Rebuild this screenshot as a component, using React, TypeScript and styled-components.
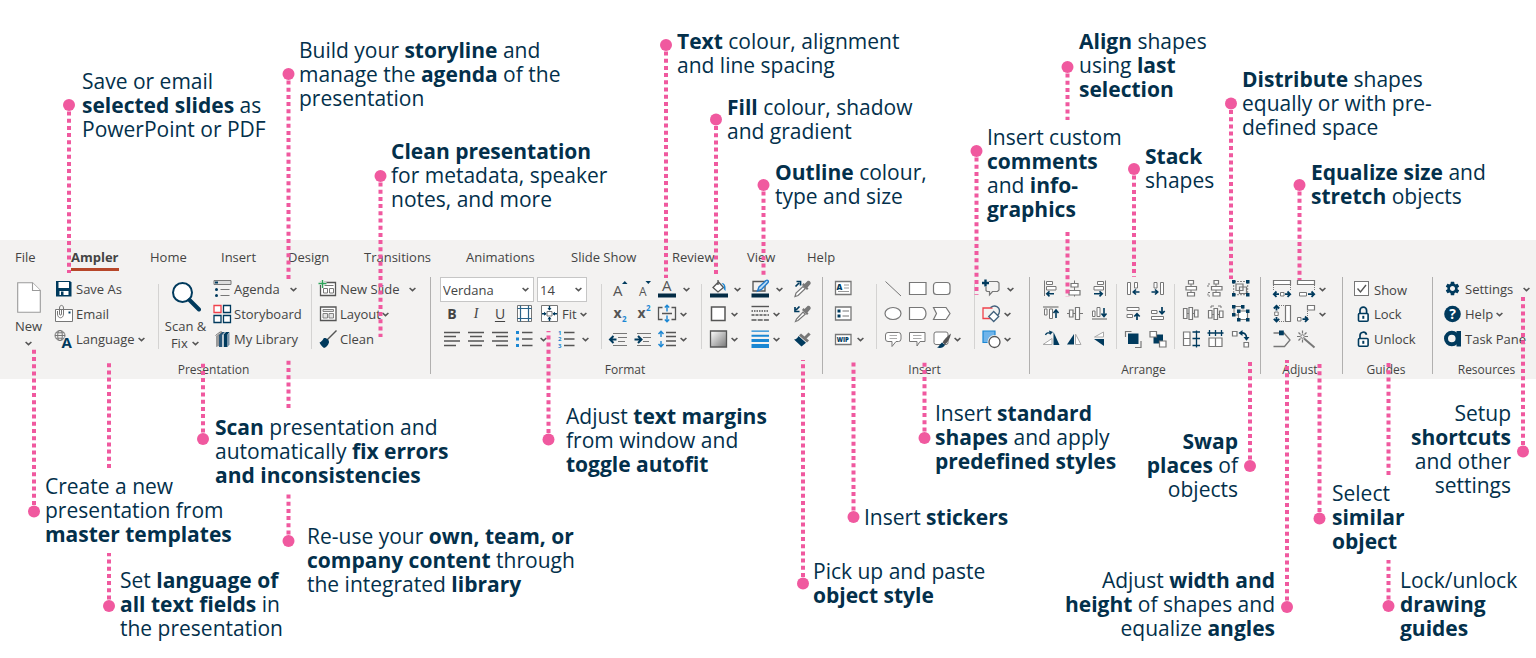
import React from "react";
import styled, { createGlobalStyle } from "styled-components";
import { MdSettings } from "react-icons/md";

const navy = "#003a5d";
const ink = "#03304b";
const grey = "#777777";
const dark = "#555555";
const blue = "#1b87d3";
const pink = "#f0599f";

const GlobalStyle = createGlobalStyle`
  * { box-sizing: border-box; }
  body {
    margin: 0;
    background: #ffffff;
    font-family: "Open Sans", "Noto Sans", sans-serif;
  }
  button, select, input { font: inherit; color: inherit; }
`;

const Page = styled.main`
  position: relative;
  overflow: hidden;
`;

const NotesArea = styled.section<{ $height: number }>`
  position: relative;
  min-height: ${(p) => p.$height}px;
`;

const Note = styled.p<{ $x: number; $y: number; $end?: boolean }>`
  position: absolute;
  left: ${(p) => p.$x}px;
  top: ${(p) => p.$y}px;
  margin: 0;
  color: ${ink};
  font-size: 21px;
  line-height: 24px;
  white-space: nowrap;
  ${(p) => p.$end && "transform: translateX(-100%); text-align: right;"}

  b {
    font-weight: 700;
  }
`;

const Overlay = styled.svg`
  position: absolute;
  inset: 0;
  width: 100%;
  height: 100%;
  overflow: visible;
  pointer-events: none;
`;

const Ribbon = styled.section`
  background: #f3f2f1;
  color: #444444;
  font-size: 13px;
`;

const Tabs = styled.nav`
  display: grid;
  grid-template-columns: 56px 79px 71px 67px 76px 102px 105px 101px 75px 60px 60px;
  justify-items: start;
  padding-left: 15px;
  padding-bottom: 6px;
`;

const Tab = styled.button<{ $active?: boolean }>`
  padding: 7px 0 1px;
  border: 0;
  border-bottom: 3px solid ${(p) => (p.$active ? "#b7472a" : "transparent")};
  background: none;
  line-height: 20px;
  font-weight: ${(p) => (p.$active ? 700 : 400)};
  white-space: nowrap;
`;

const Groups = styled.div`
  display: flex;
`;

const Group = styled.div<{ $width: number }>`
  position: relative;
  flex: none;
  width: ${(p) => p.$width}px;

  &:not(:last-child)::after {
    content: "";
    position: absolute;
    right: 0;
    top: 0;
    width: 1px;
    height: 97px;
    background: #b1b0af;
  }
`;

const GroupBody = styled.div`
  display: flex;
  height: 84px;
`;

const GroupLabel = styled.div`
  height: 18px;
  padding-right: 4px;
  line-height: 18px;
  font-size: 12px;
  text-align: center;
`;

const Cluster = styled.div<{ $pad: number; $width?: number }>`
  flex: none;
  width: ${(p) => (p.$width ? `${p.$width}px` : "auto")};
  padding-left: ${(p) => p.$pad}px;
`;

const Divider = styled.span`
  flex: none;
  width: 1px;
  height: 65px;
  margin-top: 7px;
  background: #d4d3d2;
`;

const Row = styled.div<{ $gap?: number }>`
  display: flex;
  align-items: center;
  height: 25px;
  gap: ${(p) => p.$gap ?? 0}px;
`;

const Slot = styled.div<{ $width: number }>`
  flex: none;
  width: ${(p) => p.$width}px;
`;

const ToolButton = styled.button<{ $gap?: number }>`
  display: flex;
  flex: none;
  align-items: center;
  height: 25px;
  padding: 0;
  border: 0;
  background: none;
  line-height: 18px;
  white-space: nowrap;

  & > span {
    padding-bottom: 1px;
  }
  & > svg {
    overflow: visible;
  }
  & > svg + svg {
    margin-left: ${(p) => p.$gap ?? 0}px;
  }
  & > span + svg {
    margin-left: ${(p) => p.$gap ?? 2}px;
  }
`;

const BigButton = styled.button<{ $width: number }>`
  display: flex;
  flex: none;
  flex-direction: column;
  align-items: center;
  width: ${(p) => p.$width}px;
  height: 76px;
  padding: 5px 0 0;
  border: 0;
  background: none;
  line-height: 17px;

  & > svg {
    flex: none;
    margin-bottom: 5px;
  }
`;

const BigLine = styled.span`
  display: flex;
  align-items: center;
  height: 17px;
  white-space: nowrap;
`;

const SelectBox = styled.label<{ $width: number }>`
  display: flex;
  align-items: center;
  width: ${(p) => p.$width}px;
  height: 25px;
  padding-right: 3px;
  border: 1px solid #c6c6c6;
  background: #ffffff;
`;

const Select = styled.select`
  flex: 1;
  min-width: 0;
  height: 23px;
  padding: 0 0 0 2px;
  border: 0;
  appearance: none;
  background: none;
`;

const CheckLabel = styled.label`
  display: flex;
  align-items: center;
  height: 25px;
`;

const CheckMark = styled.span`
  position: relative;
  display: flex;
  width: 24px;
  height: 25px;
`;

const Check = styled.input`
  appearance: none;
  width: 15px;
  height: 15px;
  margin: 4px 0 0 4px;
  border: 1px solid #777777;
  background: #ffffff;
`;

const CheckTick = styled.svg`
  position: absolute;
  inset: 0;
  pointer-events: none;
`;

const Chev = () => (
  <svg width="9" height="9" viewBox="0 0 9 9" fill="none" stroke={dark} strokeWidth="1.6">
    <path d="M1.6 3 4.5 5.6 7.4 3" />
  </svg>
);

const art: Record<string, React.ReactNode> = {
  save: (
    <>
      <path d="M4 4h14l1.5 1.5V19.5H4z" fill={navy} />
      <path d="M6.5 5h10.500v6H6.5zM7.5 14h9v4h-9z" fill="#fff" />
      <path d="M9 14.5h2.500v3.500H9z" fill={navy} />
    </>
  ),
  email: (
    <>
      <path d="M3.500 7.500h17v12h-17z" fill="#fff" stroke={grey} />
      <path d="M5.500 9v3c0 5 6 5 6 0V6c0-3.500-4-3.500-4 0v6c0 1.500 2 1.500 2 0V7" fill="none" stroke={grey} />
      <path d="M16.500 9.500h2v2h-2z" fill={navy} />
    </>
  ),
  language: (
    <>
      <g fill="none" stroke={grey}>
        <circle cx="8" cy="8.500" r="5" />
        <ellipse cx="8" cy="8.500" rx="2.300" ry="5" />
        <path d="M3 8.500h10M4 5.800h8M4 11.200h8" />
      </g>
      <text x="9.500" y="21" fontSize="15" fontWeight="700" fill={navy} stroke="#f3f2f1" strokeWidth="1.500" paintOrder="stroke">A</text>
    </>
  ),
  agenda: (
    <>
      <path d="M4 3.500h17v4H4z" fill="#ddd" stroke={grey} />
      <path d="M5 4.500h3v2H5z" fill={navy} />
      <circle cx="6.500" cy="12.500" r="1.500" fill={navy} />
      <circle cx="6.500" cy="18.500" r="1.500" fill={navy} />
      <path d="M10.500 12.500h9M10.500 18.500h9" stroke={grey} strokeWidth="1.200" />
    </>
  ),
  storyboard: (
    <g fill="#fff" stroke={navy} strokeWidth="1.300">
      <path d="M4 3.500h7v7H4z" stroke="#f0414b" />
      <path d="M13.500 3.500h7v7h-7zM4 13.500h7v7H4zM13.500 13.500h7v7h-7z" />
    </g>
  ),
  library: (
    <>
      <path d="M6 9l3-2v12l-3 1z" fill="#9a9a9a" />
      <path d="M9 7.500 12 5h3l-2.500 2.500V20H9z" fill="#28577a" />
      <path d="M13.500 7.500 16 5h3.500l-2 2.500V20h-4z" fill={navy} />
      <path d="M17.500 8l2-2.500v12L17.500 20z" fill="#7790a5" />
      <path d="M5.500 8.500 10 5h2L8.500 8" fill="none" stroke={grey} />
      <path d="M13 8v12" stroke="#f3f2f1" />
    </>
  ),
  newSlide: (
    <>
      <path d="M4.500 5.500h15v13h-15z" fill="#fff" stroke={dark} strokeWidth="1.300" />
      <path d="M8.500 8.500h9M7.500 11.500h4v4.500h-4zM13.500 11.500h4v4.500h-4z" fill="none" stroke={grey} />
      <path d="M6.500 2v9M2.500 6.500h8" stroke="#f3f2f1" strokeWidth="3" />
      <path d="M6.500 3v8M2.500 6.500h8" stroke="#2fa35b" strokeWidth="1.400" />
    </>
  ),
  layout: (
    <>
      <path d="M4.500 5h15.500v13.500h-15.500z" fill="#fff" stroke={dark} strokeWidth="1.300" />
      <path d="M7 7.500h10.500v2H7zM7 11.500h4.500v4.500H7zM13 11.500h4.500v4.500H13z" fill="#e4e4e4" stroke={grey} strokeWidth=".9" />
    </>
  ),
  clean: (
    <>
      <path d="M20.500 3.500 10.500 13.500" stroke={dark} strokeWidth="1.400" />
      <path d="M7.500 11.500c2-1.500 6 1.500 5.500 4-1 3-2.500 4.500-5 5.500-1.500-1-3.500-3-4.500-5.500 1.500-.5 3-2 4-4z" fill={navy} />
    </>
  ),
  frame: (
    <>
      <path d="M5.500 3.500h14v16h-14z" fill="#fff" stroke={grey} />
      <path d="M8.500 3.500v16M16.500 3.500v16M5.500 6.500h14M5.500 16.500h14" stroke="#2a6389" strokeWidth="1.200" />
    </>
  ),
  fit: (
    <>
      <path d="M3.500 3.500h16v16h-16z" fill="#fff" stroke={grey} />
      <path d="M9 9.500h5v4.500H9z" fill="none" stroke={grey} />
      <path d="M11.500 4v4M11.500 19v-4M4 11.700h4M19 11.700h-4" stroke={navy} strokeWidth="1.400" />
      <path d="M9.500 6h4l-2 2.500zM9.500 17.300h4l-2-2.500zM6 9.700v4l2.500-2zM17 9.700v4l-2.500-2z" fill={navy} />
    </>
  ),
  alignLeft: <path d="M4 5.500h16M4 9.500h12M4 14h16M4 18.500h12" stroke={dark} strokeWidth="1.300" />,
  alignCenter: <path d="M4 5.500h16M6 9.500h12M4 14h16M6 18.500h12" stroke={dark} strokeWidth="1.300" />,
  alignRight: <path d="M4 5.500h16M8 9.500h12M4 14h16M8 18.500h12" stroke={dark} strokeWidth="1.300" />,
  bullets: (
    <>
      <path d="M4 4h3v3H4zM4 10.500h3v3H4zM4 17h3v3H4z" fill={blue} />
      <path d="M10 5.500h10.500M10 12h10.500M10 18.500h10.500" stroke={dark} strokeWidth="1.300" />
    </>
  ),
  numbers: (
    <>
      <g fill={blue} fontSize="6" fontWeight="700">
        <text x="4" y="8">1</text>
        <text x="4" y="14">2</text>
        <text x="4" y="21">3</text>
      </g>
      <path d="M10 5.500h10.500M10 12h10.500M10 18.500h10.500" stroke={dark} strokeWidth="1.300" />
    </>
  ),
  grow: (
    <>
      <text x="6" y="18.500" fontSize="15" fill={dark}>A</text>
      <path d="M15 7h5.500l-2.700-3z" fill={navy} />
    </>
  ),
  shrink: (
    <>
      <text x="8" y="18.500" fontSize="12" fill={dark}>A</text>
      <path d="M14.500 4H20l-2.700 3z" fill={navy} />
    </>
  ),
  fontColor: (
    <>
      <text x="7" y="14" fontSize="15" fill={dark}>A</text>
      <path d="M3 16.500h18v4H3z" fill="#032b44" />
    </>
  ),
  sub: (
    <>
      <text x="6.500" y="16" fontSize="14" fontWeight="700" fill={dark}>x</text>
      <text x="15" y="20" fontSize="8" fontWeight="700" fill={blue}>2</text>
    </>
  ),
  sup: (
    <>
      <text x="6.500" y="16" fontSize="14" fontWeight="700" fill={dark}>x</text>
      <text x="15" y="9" fontSize="8" fontWeight="700" fill={blue}>2</text>
    </>
  ),
  margins: (
    <>
      <path d="M7.500 5.500h-4v12h4M16.500 5.500h4v12h-4M7 11.500h10" fill="none" stroke={dark} strokeWidth="1.300" />
      <path d="M12 3.500v6M12 19.500v-6M9.800 5.500 12 3.200l2.200 2.300M9.800 17.500 12 19.800l2.200-2.300" fill="none" stroke={blue} strokeWidth="1.400" />
    </>
  ),
  outdent: (
    <>
      <path d="M6 6.500h14M11 10.500h9M11 14.500h7M6 18.500h14" stroke={grey} strokeWidth="1.200" />
      <path d="M3.500 12.500h6M6.500 9l-3.500 3.500L6.500 16" fill="none" stroke={navy} strokeWidth="2" />
    </>
  ),
  indent: (
    <>
      <path d="M6 6.500h14M12 10.500h8M12 14.500h6M6 18.500h14" stroke={grey} strokeWidth="1.200" />
      <path d="M3.500 12.500h6M7 9l3.500 3.500L7 16" fill="none" stroke={navy} strokeWidth="2" />
    </>
  ),
  spacing: (
    <>
      <path d="M11 5.500h10M11 9.500h10M11 14h10M11 18.500h10" stroke={dark} strokeWidth="1.300" />
      <path d="M6 4.500v5.500M6 14v5.500M3.500 7 6 4.200 8.500 7M3.500 17 6 19.800 8.500 17" fill="none" stroke={blue} strokeWidth="1.400" />
    </>
  ),
  fill: (
    <>
      <path d="M12 3v5M7 10.500 12.500 5l5 5.500-5.500 4.500z" fill="#fff" stroke={dark} strokeWidth="1.300" />
      <path d="M15.500 6c3.500 0 4.500 3 4 8-1.500-1-2.500-3-1.500-5z" fill={blue} />
      <path d="M4 16.500h18v4H4z" fill="#032b44" />
    </>
  ),
  shadow: <path d="M5.500 5h13.500v13.500H5.500z" fill="#fff" stroke={dark} strokeWidth="1.500" />,
  gradient: (
    <>
      <defs>
        <linearGradient id="grad" x1="0" y1="0" x2="1" y2="1">
          <stop offset="0" stopColor="#fff" />
          <stop offset="1" stopColor="#777" />
        </linearGradient>
      </defs>
      <path d="M4.500 4h16v16h-16z" fill="url(#grad)" stroke={dark} strokeWidth="1.300" />
    </>
  ),
  outline: (
    <>
      <path d="M5 4.500h12v9.500H5z" fill="none" stroke={dark} strokeWidth="1.300" />
      <path d="M9.500 14 11 10l7-6.500c1.500-1 3 .5 2 2L13.500 12.500z" fill="#bcdcf5" stroke="#1f78c8" strokeWidth="1.400" />
      <path d="M3.500 16.500H21v4H3.500z" fill="#032b44" />
    </>
  ),
  dashes: (
    <g stroke={dark} strokeWidth="1.400">
      <path d="M3.500 4.500H21" />
      <path d="M3.500 9H21" strokeDasharray="1.500 1" />
      <path d="M3.500 13H21" strokeDasharray="3 1" />
      <path d="M3.500 18H21" strokeDasharray="5 1.200" />
    </g>
  ),
  weights: <path d="M3.500 3.500H21v1.300H3.500zM3.500 7.700H21v2H3.500zM3.500 12H21v3H3.500zM3.500 17H21v4H3.500z" fill={blue} />,
  pick: (
    <>
      <path d="M5 19.500 6 16l7-6.500 2.200 2.200L8 18.500z" fill="#fff" stroke={grey} strokeWidth="1.200" />
      <path d="M12 8l5 5 1.500-1.500-1-1L20.500 7c1-1.500-1-4-3-3L14.500 7l-1-1z" fill={grey} />
      <path d="M5.500 9.500 9 6M6.500 4.500h4V8.500" fill="none" stroke={navy} strokeWidth="1.700" />
    </>
  ),
  paste: (
    <>
      <path d="M5.500 19.500 6.500 17l6.500-7 2.200 2.200L8 18.500z" fill="#fff" stroke={grey} strokeWidth="1.200" />
      <path d="M12 8l5 5 1.500-1.500-1-1L20.500 7c1-1.500-1-4-3-3L14.500 7l-1-1z" fill={grey} />
      <path d="M9.500 4.500 6 8M5 5v4.500H9.500" fill="none" stroke={navy} strokeWidth="1.700" />
    </>
  ),
  brush: (
    <>
      <path d="M14 10l4.500-4.500 2.200 2L16 12z" fill={grey} />
      <path d="M11 6.500l8 7-2 2-8-7z" fill={grey} />
      <path d="M8.500 9l7.500 6.800L11.500 19.500 4 12.500c2 0 3.500-1.500 4.500-3.500z" fill={navy} />
    </>
  ),
  textCard: (
    <>
      <path d="M4.500 4.500h15.500v13H4.500z" fill="#fff" stroke={grey} strokeWidth="1.300" />
      <text x="5.500" y="12.500" fontSize="8" fontWeight="800" fill={navy}>A</text>
      <path d="M13 8h5M13 11h5M7 14.500h11" stroke="#999" />
    </>
  ),
  listCard: (
    <>
      <path d="M4.500 5h15.500v13H4.500z" fill="#fff" stroke={grey} strokeWidth="1.300" />
      <path d="M6.500 7.500h3v3h-3zM6.500 12.500h3v3h-3z" fill={navy} />
      <path d="M11.500 9h6.500M11.500 14h6.500" stroke={grey} strokeWidth="1.200" />
    </>
  ),
  wip: (
    <>
      <path d="M4.500 7.500h15.500v10H4.500z" fill="#fff" stroke={grey} strokeWidth="1.300" />
      <text x="5.800" y="15" fontSize="6" fontWeight="800" fill={navy}>WIP</text>
    </>
  ),
  line: <path d="M4.500 4.500 20 19" stroke={grey} />,
  rect: <path d="M4.500 5.500H21v12H4.500z" fill="#fff" stroke={grey} strokeWidth="1.200" />,
  round: <rect x="4.500" y="5.500" width="16.500" height="12" rx="3" fill="#fff" stroke={grey} strokeWidth="1.200" />,
  ellipse: <ellipse cx="12" cy="11.500" rx="8" ry="6" fill="#fff" stroke={grey} strokeWidth="1.200" />,
  pentagon: <path d="M4.500 5.500H17c2 0 4 3 4 6s-2 6-4 6H4.500z" fill="#fff" stroke={grey} strokeWidth="1.200" />,
  chevronShape: <path d="M4.500 5.500H17l4 6-4 6H4.500l3-6z" fill="#fff" stroke={grey} strokeWidth="1.200" />,
  bubbleRound: (
    <>
      <path d="M7 5.500h10.500a2.500 2.500 0 0 1 2.500 2.500v4a2.500 2.500 0 0 1-2.500 2.500H15l-4 5v-5H7A2.500 2.500 0 0 1 4.500 12V8A2.500 2.500 0 0 1 7 5.500z" fill="#fff" stroke={grey} />
      <path d="M8.500 8.500h7.500M8.500 11.500h7.500" stroke="#aaa" />
    </>
  ),
  bubbleSquare: (
    <>
      <path d="M4.500 5.500h15.500v9H15l-3 4.500v-4.500H4.500z" fill="#fff" stroke={grey} />
      <path d="M8 8.500h8.500M8 11.500h8.500" stroke="#aaa" />
    </>
  ),
  shapeStyle: (
    <>
      <rect x="5" y="5" width="14" height="12.500" rx="2" fill="#fff" stroke={grey} />
      <path d="M22 6.500c-4 3-7 6-8.500 9l2.500 2c3-2.500 5-6 6-11z" fill={dark} />
      <path d="M13 15.500l3 2.500c-1.500 3-5 3.500-8 2.500 2-.5 2.500-3 5-5z" fill={navy} />
    </>
  ),
  comment: (
    <>
      <path d="M10 4.500h8.500l1.500 1.500v7l-1.500 1.500h-5L10.500 18v-3.500H8L7 13.500V10" fill="none" stroke={grey} strokeWidth="1.200" />
      <path d="M6.500 2.500v7M3 6h7" stroke={navy} strokeWidth="2.400" />
    </>
  ),
  infographic: (
    <>
      <path d="M11.500 15.500v1H4V6h9.500" fill="none" stroke="#f0414b" strokeWidth="1.300" />
      <path d="M11.500 5.500c5-3.500 9 0 9 3.500 0 2-.8 3.500-2 4.500" fill="none" stroke="#41617d" strokeWidth="1.300" />
      <path d="M14.700 9.500l5 5-5 5-5-5z" fill="#fff" stroke="#41617d" strokeWidth="1.300" />
    </>
  ),
  merge: (
    <>
      <path d="M4 4h12v11.500H4z" fill="#6fb4ea" stroke={blue} strokeWidth="1.200" />
      <circle cx="15.500" cy="15" r="7" fill="#f3f2f1" />
      <circle cx="15.500" cy="15" r="5.500" fill="#fff" stroke={dark} strokeWidth="1.300" />
    </>
  ),
  shapesLeft: (
    <>
      <path d="M6.500 3.500v15.500" stroke={grey} />
      <path d="M8.500 4.500h6v3h-6zM8.500 9.500h9.500v3.500H8.500z" fill="#fff" stroke={grey} />
      <path d="M9 16.800h7M11.500 14.300 8.800 16.800l2.700 2.500" fill="none" stroke={navy} strokeWidth="1.600" />
    </>
  ),
  shapesCenter: (
    <>
      <path d="M11.500 3.500v16" stroke={grey} />
      <path d="M8 6.500h7v3.500H8zM6 13.500h11v4.500H6z" fill="#fff" stroke={grey} strokeWidth="1.200" />
    </>
  ),
  shapesRight: (
    <>
      <path d="M17.500 3.500v15.500" stroke={grey} />
      <path d="M9.500 4.500h6v3h-6zM6 9.500h9.500v3.500H6z" fill="#fff" stroke={grey} />
      <path d="M6 16.800h7M11.500 14.300l2.700 2.500-2.700 2.500" fill="none" stroke={navy} strokeWidth="1.600" />
    </>
  ),
  shapesTop: (
    <>
      <path d="M5 5h15.500" stroke={grey} strokeWidth="1.200" />
      <path d="M6.500 7h2.500v6H6.500zM11.500 7h3v9.500h-3z" fill="#fff" stroke={grey} />
      <path d="M18 16V8M15.500 11 18 8l2.500 3" fill="none" stroke={navy} strokeWidth="1.600" />
    </>
  ),
  shapesMiddle: (
    <>
      <path d="M4 11.500h16" stroke={grey} />
      <path d="M6.500 8h3.500v7H6.500zM12.500 5.500h4v12h-4z" fill="#fff" stroke={grey} strokeWidth="1.200" />
    </>
  ),
  shapesBottom: (
    <>
      <path d="M4 17h15" stroke={grey} strokeWidth="1.200" />
      <path d="M4.500 9h2.500v5.500H4.500zM9 5.500h3v9H9z" fill="#fff" stroke={grey} />
      <path d="M16 6v8.500M13.500 11.500l2.500 3 2.500-3" fill="none" stroke={navy} strokeWidth="1.600" />
    </>
  ),
  rotate: (
    <>
      <path d="M5 17.500h9v-6z" fill="#fff" stroke="#aaa" />
      <path d="M15.500 5v13H21.500z" fill={navy} />
      <path d="M7.500 8c1-2.500 3.500-2.500 5-1.500" fill="none" stroke={navy} strokeWidth="1.400" />
      <path d="M11 3.500l4 1.500-3 3z" fill={navy} />
    </>
  ),
  flipH: (
    <>
      <path d="M4 17.500h7V7z" fill={navy} />
      <path d="M12.500 7v10.500H18z" fill="#fff" stroke="#aaa" />
    </>
  ),
  flipV: (
    <>
      <path d="M6.500 10h9V5z" fill="#fff" stroke="#aaa" />
      <path d="M6 12h10v7z" fill={navy} />
    </>
  ),
  stackLeft: (
    <>
      <path d="M6.500 5.500h3v12h-3zM13.500 5.500h3V11h-3z" fill="#fff" stroke={grey} />
      <path d="M12.500 15h6M15 12.500 12.300 15l2.700 2.500" fill="none" stroke={navy} strokeWidth="1.700" />
    </>
  ),
  stackRight: (
    <>
      <path d="M14.500 5.500h3v12h-3zM8 5.500h3V11H8z" fill="#fff" stroke={grey} />
      <path d="M5.500 15h6M9 12.500l2.700 2.500L9 17.500" fill="none" stroke={navy} strokeWidth="1.700" />
    </>
  ),
  stackUp: (
    <>
      <path d="M6 5.500h12v3H6zM6 12.500h5.500v3H6z" fill="#fff" stroke={grey} />
      <path d="M16 18v-6M13.300 14.500 16 11.800l2.700 2.700" fill="none" stroke={navy} strokeWidth="1.700" />
    </>
  ),
  stackDown: (
    <>
      <path d="M5.500 14.500h12v3h-12zM5.500 8.500h5.500v3H5.500z" fill="#fff" stroke={grey} />
      <path d="M16 5v6.500M13.300 9 16 11.700 18.700 9" fill="none" stroke={navy} strokeWidth="1.700" />
    </>
  ),
  front: (
    <>
      <path d="M4.500 10V4.500h6M20 14v6.500h-6" fill="none" stroke={grey} strokeWidth="1.200" />
      <path d="M7 6.500h10.500v10.500H7z" fill={navy} />
    </>
  ),
  back: (
    <>
      <path d="M7.500 7.500h9.500v9H7.500z" fill={navy} />
      <path d="M4 4.500h6.500v5.500H4zM13.500 14h6.500v6h-6.500z" fill="#fff" stroke={grey} strokeWidth="1.200" />
    </>
  ),
  distV: (
    <>
      <path d="M12 6v12" stroke={grey} />
      <path d="M9.500 3.500h5V7h-5zM7 9.500h10.500v3.500H7zM8.500 15.500h7V19h-7z" fill="#fff" stroke={grey} strokeWidth="1.200" />
    </>
  ),
  distVSpace: (
    <>
      <path d="M12 6v12" stroke={grey} />
      <path d="M10 3.500h4.500V7H10zM7.500 9.500H18v3.500H7.500zM9 15.500h7V19H9z" fill="#fff" stroke={grey} strokeWidth="1.200" />
      <path d="M6 7H4v4M6 15.500H4V19h2" fill="none" stroke={grey} strokeDasharray="2 1" />
    </>
  ),
  ungroup: (
    <>
      <path d="M5 4.500h13.500M5 17.700h13.500M4.700 5v12M18.700 5v12" stroke={grey} strokeWidth=".9" strokeDasharray="2 1" />
      <path d="M7 7h7v6.500H7zM10.500 10h7v6.500h-7z" fill="none" stroke={grey} strokeWidth="1.200" />
      <path d="M3 3h3.500v3.500H3zM17 3h3.500v3.500H17zM3 16h3.500v3.500H3zM17 16h3.500v3.500H17z" fill={navy} />
    </>
  ),
  distH: (
    <>
      <path d="M5 11.500h14" stroke={grey} />
      <path d="M4.500 6.500H8v10H4.500zM10 5.500h3.500v12H10zM15.500 8h3.500v7h-3.500z" fill="#fff" stroke={grey} strokeWidth="1.200" />
    </>
  ),
  distHSpace: (
    <>
      <path d="M5 12.500h14" stroke={grey} />
      <path d="M4.500 8.500H8v7.500H4.500zM10 6.500h3.500v11H10zM15.500 9h3.500v6.500h-3.500z" fill="#fff" stroke={grey} strokeWidth="1.200" />
      <path d="M7 6V4h3M14 4h3v2" fill="none" stroke={grey} />
    </>
  ),
  group: (
    <>
      <path d="M5 4.500h9v3M5 4.500v8.500h4" fill="none" stroke={grey} />
      <path d="M9.500 9h9v8.500h-9z" fill="#fff" stroke={grey} strokeWidth="1.200" />
      <path d="M3 3h3.500v3.500H3zM12 3h3.500v3.500H12zM3 11h3.500v3.500H3zM8 7.500h3.500V11H8zM17 7.500h3.500V11H17zM8 16h3.500v3.500H8zM17 16h3.500v3.500H17z" fill={navy} />
    </>
  ),
  rowsH: (
    <>
      <path d="M4.500 5h6.500v6.500H4.500zM4.500 11.500h6.500V18.500H4.500z" fill="#fff" stroke={grey} strokeWidth="1.200" />
      <path d="M17.500 3.500v17M13.500 5h7.500M13.500 11.500h7.500M13.500 18.500h7.500" stroke={navy} strokeWidth="1.300" />
    </>
  ),
  colsW: (
    <>
      <path d="M5 11h6.500v8.500H5zM11.500 11H18v8.500h-6.500z" fill="#fff" stroke={grey} strokeWidth="1.200" />
      <path d="M3.500 6h16M5.500 3v6M11.500 3v6M17.500 3v6" stroke={navy} strokeWidth="1.300" />
    </>
  ),
  swap: (
    <>
      <path d="M3.500 4.500h4.500V9H3.500zM15 15.500h4.500v4.500H15z" fill="#fff" stroke={grey} strokeWidth="1.200" />
      <path d="M11.500 6c4-.5 6 1 6 5" fill="none" stroke={navy} strokeWidth="1.700" />
      <path d="M9.500 6l4-3v6zM14.500 10h6l-3 3.800z" fill={navy} />
    </>
  ),
  sameWidth: (
    <>
      <path d="M3.500 3.500h17v4h-17z" fill="#fff" stroke={grey} strokeWidth="1.200" />
      <path d="M3.500 8v5M20.500 8v5" stroke={grey} strokeDasharray="1 1" />
      <path d="M10.500 15.500h3.500V19h-3.500z" fill="#fff" stroke={grey} />
      <path d="M4 17.200h5M20 17.200h-5M6.500 14.500 3.800 17.200l2.700 2.700M17.500 14.500l2.700 2.700-2.700 2.700" fill="none" stroke={navy} strokeWidth="1.800" />
    </>
  ),
  stretch: (
    <>
      <path d="M3.500 3.500h17v4h-17z" fill="#fff" stroke={grey} strokeWidth="1.200" />
      <path d="M20.500 8v5" stroke={grey} strokeDasharray="1 1" />
      <path d="M5.500 15.500h7V19h-7z" fill="#fff" stroke={grey} />
      <path d="M14 17.200h6M17.500 14.500l2.700 2.700-2.700 2.700" fill="none" stroke={navy} strokeWidth="1.800" />
    </>
  ),
  sameHeight: (
    <>
      <path d="M15.500 3.500h5v16h-5z" fill="#fff" stroke={grey} strokeWidth="1.200" />
      <path d="M9 3.500h6M9 19.500h6" stroke={grey} strokeDasharray="1 1" />
      <path d="M4.700 10h3.500v3.500H4.700z" fill="#fff" stroke={grey} />
      <path d="M6.500 8.500v-5M6.500 15v5M3.800 6.500l2.700-2.700 2.700 2.700M3.800 16.800l2.700 2.700 2.700-2.700" fill="none" stroke={navy} strokeWidth="1.800" />
    </>
  ),
  stretchTo: (
    <>
      <path d="M13.500 3.500h7v4.500h-7z" fill="#fff" stroke={grey} strokeWidth="1.200" />
      <path d="M13.500 9v7" stroke={grey} strokeDasharray="1 1" />
      <path d="M3.500 15.500h3.500V19h-3.500z" fill="#fff" stroke={grey} />
      <path d="M8.500 17.200h5M11 14.500l2.700 2.700L11 19.900" fill="none" stroke={navy} strokeWidth="1.800" />
    </>
  ),
  angle: (
    <>
      <path d="M3.500 6H14l6 7-5.500 6.500H3.500" fill="none" stroke={grey} strokeWidth="1.300" />
      <path d="M9 3.500h4.800v4.800H9z" fill={navy} />
    </>
  ),
  wand: (
    <>
      <path d="M8.500 3.500v3M8.500 12.500v3M3 9.500h3M11 9.500h3M4.500 5.500l2 2M12.500 5.500l-2 2M4.500 13.500l2-2" stroke={grey} strokeWidth="1.200" />
      <circle cx="8.500" cy="9.500" r="1.800" fill="none" stroke={grey} />
      <path d="M10 11.500l10.500 9" stroke={grey} strokeWidth="2" />
    </>
  ),
  lock: (
    <>
      <path d="M10 11V8.500a3.300 3.300 0 0 1 6.600 0V11" fill="none" stroke={navy} strokeWidth="1.700" />
      <rect x="8.500" y="11.500" width="9.600" height="7.800" rx="1" fill="#fff" stroke={navy} strokeWidth="1.600" />
      <path d="M12.300 13.800h2v3h-2z" fill={navy} />
    </>
  ),
  unlock: (
    <>
      <path d="M10 11V8.500a3.300 3.300 0 0 1 6.500-.8" fill="none" stroke={navy} strokeWidth="1.700" />
      <rect x="8.500" y="11.500" width="9.600" height="7.800" rx="1" fill="#fff" stroke={navy} strokeWidth="1.600" />
      <path d="M12.300 13.800h2v3h-2z" fill={navy} />
    </>
  ),
  settings: <MdSettings x="3" y="3" size={17} color={navy} />,
  help: (
    <>
      <circle cx="11.500" cy="12" r="8.300" fill={navy} />
      <text x="8.300" y="17" fontSize="14" fontWeight="700" fill="#fff">?</text>
    </>
  ),
  taskPane: (
    <>
      <circle cx="10.800" cy="11.500" r="5.800" fill="none" stroke={navy} strokeWidth="4" />
      <path d="M15.500 4H20v15.500h-4.500z" fill={navy} />
    </>
  ),
};

const Icon = ({ name }: { name: string }) => (
  <svg width="24" height="25" viewBox="0 0 24 25" fill="none" aria-hidden="true">
    {art[name]}
  </svg>
);

type ToolProps = { icon: string; label: string; text?: boolean; menu?: boolean; gap?: number };

const Tool = ({ icon, label, text, menu, gap }: ToolProps) => (
  <ToolButton type="button" aria-label={label} $gap={gap}>
    <Icon name={icon} />
    {text && <span>{label}</span>}
    {menu && <Chev />}
  </ToolButton>
);

const StyleToggle = styled.button<{ $kind: "bold" | "italic" | "underline" }>`
  width: 24px;
  height: 25px;
  padding: 0 0 2px;
  border: 0;
  background: none;
  font-size: 14px;
  font-weight: ${(p) => (p.$kind === "bold" ? 700 : 400)};
  font-style: ${(p) => (p.$kind === "italic" ? "italic" : "normal")};
  font-family: ${(p) => (p.$kind === "italic" ? '"Liberation Serif", serif' : "inherit")};
  text-decoration: ${(p) => (p.$kind === "underline" ? "underline" : "none")};
  text-underline-offset: 2px;
`;

/* Dotted leaders: x, y of the round end, then where the dots stop. */
const leaders: Array<[number, number, number]> = [
  [69, 105, 273], [288.5, 74, 279], [380.5, 176, 337], [666, 45, 278], [716, 119.5, 274],
  [763.5, 185, 275], [1067.5, 67, 120], [976.5, 151, 295], [1134, 169, 277], [1231, 103.5, 279],
  [1299.5, 185, 280], [34, 511.5, 349], [109, 606, 553], [203, 439, 363], [288.5, 541, 494],
  [548.5, 439.5, 331], [803, 583.5, 360], [853.5, 517, 362], [924.5, 438, 362], [1250, 466, 361],
  [1287, 607, 360], [1319.5, 518.5, 364], [1388.5, 606, 560], [1523, 451.5, 296],
];

/* Leader pieces that carry on behind another note. */
const pieces: Array<[number, number, number]> = [
  [1067.5, 232, 297], [109, 468, 360], [288.5, 408, 360], [1388.5, 475, 360],
];

const tabs = ["File", "Ampler", "Home", "Insert", "Design", "Transitions", "Animations", "Slide Show", "Review", "View", "Help"];

export default function App() {
  return (
    <Page>
      <GlobalStyle />
      <NotesArea $height={240}>
        <Note $x={82} $y={69}>Save or email<br /><b>selected slides</b> as<br />PowerPoint or PDF</Note>
        <Note $x={299} $y={38}>Build your <b>storyline</b> and<br />manage the <b>agenda</b> of the<br />presentation</Note>
        <Note $x={391} $y={139}><b>Clean presentation</b><br />for metadata, speaker<br />notes, and more</Note>
        <Note $x={677} $y={29}><b>Text</b> colour, alignment<br />and line spacing</Note>
        <Note $x={727} $y={95}><b>Fill</b> colour, shadow<br />and gradient</Note>
        <Note $x={775} $y={160}><b>Outline</b> colour,<br />type and size</Note>
        <Note $x={1079} $y={29}><b>Align</b> shapes<br />using <b>last<br />selection</b></Note>
        <Note $x={987} $y={125}>Insert custom<br /><b>comments</b><br />and <b>info-<br />graphics</b></Note>
        <Note $x={1145} $y={144}><b>Stack</b><br />shapes</Note>
        <Note $x={1242} $y={67}><b>Distribute</b> shapes<br />equally or with pre-<br />defined space</Note>
        <Note $x={1311} $y={160}><b>Equalize size</b> and<br /><b>stretch</b> objects</Note>
      </NotesArea>

      <Ribbon>
        <Tabs aria-label="Ribbon tabs">
          {tabs.map((t) => (
            <Tab key={t} type="button" $active={t === "Ampler"}>{t}</Tab>
          ))}
        </Tabs>
        <Groups>
          <Group $width={431}>
            <GroupBody>
              <Cluster $pad={6}>
                <BigButton type="button" $width={45}>
                  <svg width="24" height="31" viewBox="0 0 24 31" fill="#fff" stroke="#9a9a9a" strokeWidth="1.100">
                    <path d="M.7.700H15.500L23.300 8.500V30.300H.700z" />
                    <path d="M15.500.700V8.500h7.800" />
                  </svg>
                  <BigLine>New</BigLine>
                  <BigLine><Chev /></BigLine>
                </BigButton>
              </Cluster>
              <Cluster $pad={1} $width={107}>
                <Tool icon="save" label="Save As" text />
                <Tool icon="email" label="Email" text />
                <Tool icon="language" label="Language" text menu />
              </Cluster>
              <Divider />
              <Cluster $pad={2} $width={51}>
                <BigButton type="button" $width={49}>
                  <svg width="30" height="31" viewBox="0 0 30 31" fill="none" stroke={navy}>
                    <circle cx="11.500" cy="10.500" r="9.500" fill="#fff" strokeWidth="2" />
                    <path d="M18.500 18 28 27.500" strokeWidth="4" strokeLinecap="round" />
                  </svg>
                  <BigLine>Scan &amp;</BigLine>
                  <BigLine>Fix&nbsp;<Chev /></BigLine>
                </BigButton>
              </Cluster>
              <Cluster $pad={0} $width={101}>
                <Tool icon="agenda" label="Agenda" text menu gap={9} />
                <Tool icon="storyboard" label="Storyboard" text />
                <Tool icon="library" label="My Library" text />
              </Cluster>
              <Divider />
              <Cluster $pad={4}>
                <Tool icon="newSlide" label="New Slide" text menu gap={9} />
                <Tool icon="layout" label="Layout" text menu gap={0} />
                <Tool icon="clean" label="Clean" text />
              </Cluster>
            </GroupBody>
            <GroupLabel>Presentation</GroupLabel>
          </Group>

          <Group $width={392}>
            <GroupBody>
              <Cluster $pad={9} $width={170}>
                <Row $gap={3}>
                  <SelectBox $width={94}>
                    <Select aria-label="Font" defaultValue="Verdana"><option>Verdana</option></Select>
                    <Chev />
                  </SelectBox>
                  <SelectBox $width={50}>
                    <Select aria-label="Font size" defaultValue="14"><option>14</option></Select>
                    <Chev />
                  </SelectBox>
                </Row>
                <Row>
                  <StyleToggle type="button" $kind="bold">B</StyleToggle>
                  <StyleToggle type="button" $kind="italic">I</StyleToggle>
                  <StyleToggle type="button" $kind="underline">U</StyleToggle>
                  <Slot $width={26}><Tool icon="frame" label="Text frame" /></Slot>
                  <Tool icon="fit" label="Fit" text menu />
                </Row>
                <Row>
                  <Tool icon="alignLeft" label="Align left" />
                  <Tool icon="alignCenter" label="Align centre" />
                  <Tool icon="alignRight" label="Align right" />
                  <Slot $width={42}><Tool icon="bullets" label="Bullets" menu gap={3} /></Slot>
                  <Tool icon="numbers" label="Numbering" menu gap={3} />
                </Row>
              </Cluster>
              <Divider />
              <Cluster $pad={5} $width={99}>
                <Row>
                  <Tool icon="grow" label="Increase font size" />
                  <Tool icon="shrink" label="Decrease font size" />
                  <Tool icon="fontColor" label="Font colour" menu gap={3} />
                </Row>
                <Row>
                  <Tool icon="sub" label="Subscript" />
                  <Tool icon="sup" label="Superscript" />
                  <Tool icon="margins" label="Text margins" menu />
                </Row>
                <Row>
                  <Tool icon="outdent" label="Decrease indent" />
                  <Tool icon="indent" label="Increase indent" />
                  <Tool icon="spacing" label="Line spacing" menu />
                </Row>
              </Cluster>
              <Divider />
              <Cluster $pad={4}>
                <Row>
                  <Slot $width={42}><Tool icon="fill" label="Fill colour" menu gap={3} /></Slot>
                  <Slot $width={42}><Tool icon="outline" label="Outline colour" menu gap={3} /></Slot>
                  <Tool icon="pick" label="Pick up style" />
                </Row>
                <Row>
                  <Slot $width={42}><Tool icon="shadow" label="Shadow" menu /></Slot>
                  <Slot $width={42}><Tool icon="dashes" label="Outline type" menu /></Slot>
                  <Tool icon="paste" label="Paste style" />
                </Row>
                <Row>
                  <Slot $width={42}><Tool icon="gradient" label="Gradient" menu /></Slot>
                  <Slot $width={42}><Tool icon="weights" label="Outline size" menu /></Slot>
                  <Tool icon="brush" label="Format painter" />
                </Row>
              </Cluster>
            </GroupBody>
            <GroupLabel>Format</GroupLabel>
          </Group>

          <Group $width={207}>
            <GroupBody>
              <Cluster $pad={8} $width={53}>
                <Tool icon="textCard" label="Text sticker" />
                <Tool icon="listCard" label="List sticker" />
                <Tool icon="wip" label="Status sticker" menu gap={1} />
              </Cluster>
              <Divider />
              <Cluster $pad={4} $width={97}>
                <Row>
                  <Tool icon="line" label="Line" />
                  <Tool icon="rect" label="Rectangle" />
                  <Tool icon="round" label="Rounded rectangle" />
                </Row>
                <Row>
                  <Tool icon="ellipse" label="Ellipse" />
                  <Tool icon="pentagon" label="Pentagon" />
                  <Tool icon="chevronShape" label="Chevron" />
                </Row>
                <Row>
                  <Tool icon="bubbleRound" label="Rounded callout" />
                  <Tool icon="bubbleSquare" label="Square callout" />
                  <Tool icon="shapeStyle" label="Shape style" menu />
                </Row>
              </Cluster>
              <Divider />
              <Cluster $pad={4}>
                <Tool icon="comment" label="Comment" menu gap={3} />
                <Tool icon="infographic" label="Infographic" menu />
                <Tool icon="merge" label="Merge shapes" menu />
              </Cluster>
            </GroupBody>
            <GroupLabel>Insert</GroupLabel>
          </Group>

          <Group $width={231}>
            <GroupBody>
              <Cluster $pad={8} $width={86}>
                <Row $gap={1}>
                  <Tool icon="shapesLeft" label="Align shapes left" />
                  <Tool icon="shapesCenter" label="Align shapes centre" />
                  <Tool icon="shapesRight" label="Align shapes right" />
                </Row>
                <Row $gap={1}>
                  <Tool icon="shapesTop" label="Align shapes top" />
                  <Tool icon="shapesMiddle" label="Align shapes middle" />
                  <Tool icon="shapesBottom" label="Align shapes bottom" />
                </Row>
                <Row $gap={1}>
                  <Tool icon="rotate" label="Rotate" />
                  <Tool icon="flipH" label="Flip horizontally" />
                  <Tool icon="flipV" label="Flip vertically" />
                </Row>
              </Cluster>
              <Divider />
              <Cluster $pad={4} $width={57}>
                <Row $gap={1}>
                  <Tool icon="stackLeft" label="Stack left" />
                  <Tool icon="stackRight" label="Stack right" />
                </Row>
                <Row $gap={1}>
                  <Tool icon="stackUp" label="Stack up" />
                  <Tool icon="stackDown" label="Stack down" />
                </Row>
                <Row $gap={1}>
                  <Tool icon="front" label="Bring to front" />
                  <Tool icon="back" label="Send to back" />
                </Row>
              </Cluster>
              <Divider />
              <Cluster $pad={4}>
                <Row $gap={1}>
                  <Tool icon="distV" label="Distribute vertically" />
                  <Tool icon="distVSpace" label="Distribute vertically with space" />
                  <Tool icon="ungroup" label="Ungroup" />
                </Row>
                <Row $gap={1}>
                  <Tool icon="distH" label="Distribute horizontally" />
                  <Tool icon="distHSpace" label="Distribute horizontally with space" />
                  <Tool icon="group" label="Group" />
                </Row>
                <Row $gap={1}>
                  <Tool icon="rowsH" label="Row heights" />
                  <Tool icon="colsW" label="Column widths" />
                  <Tool icon="swap" label="Swap places" />
                </Row>
              </Cluster>
            </GroupBody>
            <GroupLabel>Arrange</GroupLabel>
          </Group>

          <Group $width={82}>
            <GroupBody>
              <Cluster $pad={9}>
                <Row>
                  <Tool icon="sameWidth" label="Equalize width" />
                  <Tool icon="stretch" label="Stretch" menu />
                </Row>
                <Row>
                  <Tool icon="sameHeight" label="Equalize height" />
                  <Tool icon="stretchTo" label="Stretch to" menu />
                </Row>
                <Row>
                  <Tool icon="angle" label="Equalize angles" />
                  <Tool icon="wand" label="Select similar" />
                </Row>
              </Cluster>
            </GroupBody>
            <GroupLabel>Adjust</GroupLabel>
          </Group>

          <Group $width={90}>
            <GroupBody>
              <Cluster $pad={7}>
                <CheckLabel>
                  <CheckMark>
                    <Check type="checkbox" defaultChecked />
                    <CheckTick width="24" height="25" viewBox="0 0 24 25" fill="none">
                      <path d="M7.500 11.500l3 3.500 5.500-7" stroke={dark} strokeWidth="1.400" />
                    </CheckTick>
                  </CheckMark>
                  Show
                </CheckLabel>
                <Tool icon="lock" label="Lock" text />
                <Tool icon="unlock" label="Unlock" text />
              </Cluster>
            </GroupBody>
            <GroupLabel>Guides</GroupLabel>
          </Group>

          <Group $width={111}>
            <GroupBody>
              <Cluster $pad={8}>
                <Tool icon="settings" label="Settings" text menu gap={9} />
                <Tool icon="help" label="Help" text menu />
                <Tool icon="taskPane" label="Task Pane" text />
              </Cluster>
            </GroupBody>
            <GroupLabel>Resources</GroupLabel>
          </Group>
        </Groups>
      </Ribbon>

      <NotesArea $height={279}>
        <Note $x={45} $y={95}>Create a new<br />presentation from<br /><b>master templates</b></Note>
        <Note $x={120} $y={189}>Set <b>language of<br />all text fields</b> in<br />the presentation</Note>
        <Note $x={215} $y={36}><b>Scan</b> presentation and<br />automatically <b>fix errors<br />and inconsistencies</b></Note>
        <Note $x={307} $y={145}>Re-use your <b>own, team, or<br />company content</b> through<br />the integrated <b>library</b></Note>
        <Note $x={566} $y={25}>Adjust <b>text margins</b><br />from window and<br /><b>toggle autofit</b></Note>
        <Note $x={813} $y={180}>Pick up and paste<br /><b>object style</b></Note>
        <Note $x={864} $y={126}>Insert <b>stickers</b></Note>
        <Note $x={935} $y={22}>Insert <b>standard<br />shapes</b> and apply<br /><b>predefined styles</b></Note>
        <Note $x={1238} $y={50} $end><b>Swap<br />places</b> of<br />objects</Note>
        <Note $x={1275} $y={189} $end>Adjust <b>width and<br />height</b> of shapes and<br />equalize <b>angles</b></Note>
        <Note $x={1332} $y={102}>Select<br /><b>similar<br />object</b></Note>
        <Note $x={1400} $y={189}>Lock/unlock<br /><b>drawing<br />guides</b></Note>
        <Note $x={1511} $y={22} $end>Setup<br /><b>shortcuts</b><br />and other<br />settings</Note>
      </NotesArea>

      <Overlay aria-hidden="true">
        <g stroke={pink} strokeWidth="4" strokeDasharray="4 3.200">
          {leaders.map(([x, y, end]) => (
            <line key={x} x1={x} x2={x} y1={y + (end > y ? 6.5 : -6.5)} y2={end} />
          ))}
          {pieces.map(([x, y, end]) => (
            <line key={`${x}-${y}`} x1={x} x2={x} y1={y} y2={end} />
          ))}
        </g>
        {leaders.map(([x, y]) => (
          <circle key={x} cx={x} cy={y} r="6" fill={pink} />
        ))}
      </Overlay>
    </Page>
  );
}
